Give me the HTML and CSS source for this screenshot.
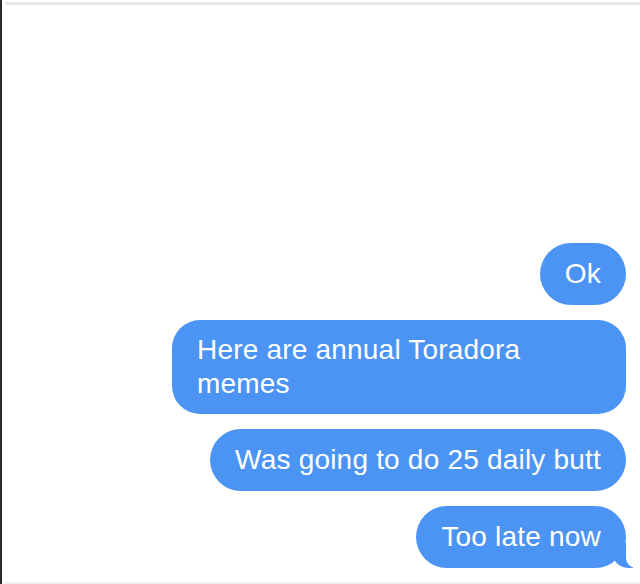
FILE: index.html
```html
<!DOCTYPE html>
<html lang="en">

<head>
    <meta charset="UTF-8">
    <meta name="viewport" content="width=device-width, initial-scale=1.0">
    <title>Messages</title>
    <link rel="stylesheet" href="styles.css">
</head>

<body>
    <div class="screen">
        <div class="thread">
            <div class="bubble">Ok</div>
            <div class="bubble wide">Here are annual Toradora memes</div>
            <div class="bubble">Was going to do 25 daily butt</div>
            <div class="bubble tail">Too late now</div>
        </div>
    </div>
</body>

</html>
```

FILE: styles.css
```css
* {
    margin: 0;
    padding: 0;
    box-sizing: border-box;
}

body {
    background-color: #fff;
    font-family: "Liberation Sans", Arial, sans-serif;
}

.screen {
    width: 640px;
    height: 584px;
    border-left: 2px solid #2b2b2b;
    padding-top: 2px;
}

.thread {
    height: 582px;
    border-top: 3px solid #e8e8e8;
    border-bottom: 2px solid #ececec;
    margin-left: 3px;
    display: flex;
    flex-direction: column;
    align-items: flex-end;
    justify-content: flex-end;
    gap: 15px;
    padding-right: 14px;
    padding-bottom: 14px;
}

.bubble {
    position: relative;
    background-color: #4b94f4;
    color: #fff;
    font-size: 28px;
    line-height: 34px;
    letter-spacing: 0.2px;
    padding: 14px 25px;
    border-radius: 31px;
}

.wide {
    width: 454px;
    padding-top: 13px;
    padding-bottom: 13px;
    border-radius: 28px;
}

.tail::before {
    content: "";
    position: absolute;
    bottom: 0;
    right: -7px;
    width: 20px;
    height: 25px;
    background-color: #4b94f4;
    border-bottom-left-radius: 16px 14px;
}

.tail::after {
    content: "";
    position: absolute;
    bottom: 0;
    right: -26px;
    width: 26px;
    height: 25px;
    background-color: #fff;
    border-bottom-left-radius: 10px;
}
```
